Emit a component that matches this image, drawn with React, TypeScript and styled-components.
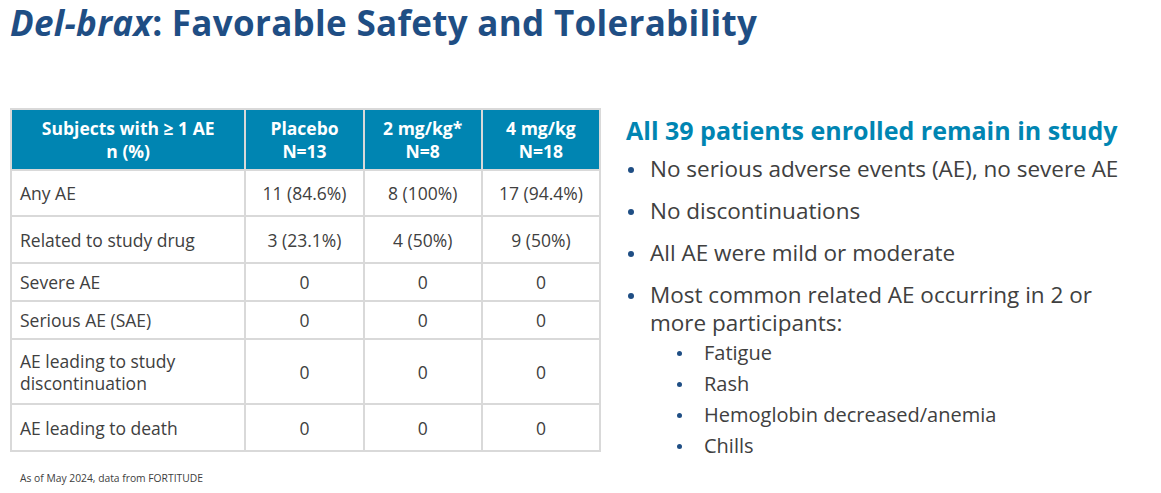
import React from 'react';
import styled, { createGlobalStyle } from 'styled-components';

const colors = {
  navy: '#1f4e84',
  teal: '#0085b2',
  text: '#404040',
  grid: '#d9d9d9',
  white: '#ffffff',
};

const GlobalStyle = createGlobalStyle`
  html, body {
    margin: 0;
    padding: 0;
    background: ${colors.white};
    font-family: 'Open Sans', 'Noto Sans', sans-serif;
  }
`;

const Slide = styled.div`
  width: 1161px;
  height: 493px;
  overflow: hidden;
  box-sizing: border-box;
  padding: 0 0 0 10px;
`;

const Title = styled.h1`
  margin: 0;
  font-size: 35px;
  line-height: 45px;
  font-weight: 700;
  color: ${colors.navy};
  letter-spacing: 0.3px;

  em {
    font-style: italic;
  }
`;

const Body = styled.div`
  display: flex;
  align-items: flex-start;
  margin-top: 63px;
`;

const LeftColumn = styled.div`
  width: 591px;
  display: flex;
  flex-direction: column;
`;

const Table = styled.table`
  width: 591px;
  border-collapse: collapse;
  table-layout: fixed;
  border: 2px solid ${colors.grid};
`;

const HeadCell = styled.th<{ $w: number }>`
  width: ${(p) => p.$w}%;
  height: 59px;
  padding: 0;
  background: ${colors.teal};
  color: ${colors.white};
  font-size: 17.5px;
  line-height: 23px;
  font-weight: 700;
  text-align: center;
  border-left: 2px solid ${colors.grid};
  &:first-child {
    border-left: none;
  }
`;

const Row = styled.tr<{ $h: number }>`
  height: ${(p) => p.$h}px;
  border-top: 2px solid ${colors.grid};
`;

const Cell = styled.td<{ $label?: boolean }>`
  padding: 0 0 0 ${(p) => (p.$label ? '8px' : '0')};
  color: ${colors.text};
  font-size: 17.5px;
  line-height: 22px;
  text-align: ${(p) => (p.$label ? 'left' : 'center')};
  border-left: 2px solid ${colors.grid};
`;

const Footnote = styled.div`
  margin: 19px 0 0 10px;
  font-size: 10.3px;
  color: ${colors.text};
`;

const SidePanel = styled.div`
  margin-left: 25px;
  margin-top: 6px;
`;

const SideHeading = styled.h2`
  margin: 0 0 9px;
  font-size: 25px;
  line-height: 32px;
  font-weight: 700;
  color: ${colors.teal};
`;

const BulletList = styled.ul`
  margin: 0;
  padding: 0;
  list-style: none;
`;

const Bullet = styled.li`
  position: relative;
  padding-left: 24px;
  margin-bottom: 14px;
  font-size: 22.5px;
  line-height: 28px;
  color: ${colors.text};

  &::before {
    content: '';
    position: absolute;
    left: 2px;
    top: 12px;
    width: 6px;
    height: 6px;
    border-radius: 50%;
    background: ${colors.navy};
  }
`;

const SubList = styled.ul`
  margin: 0;
  padding: 0;
  list-style: none;
`;

const SubBullet = styled.li`
  position: relative;
  padding-left: 54px;
  font-size: 20px;
  line-height: 31px;
  color: ${colors.text};

  &::before {
    content: '';
    position: absolute;
    left: 27px;
    top: 14px;
    width: 5px;
    height: 5px;
    border-radius: 50%;
    background: ${colors.navy};
  }
`;

const rows: { label: React.ReactNode; values: string[]; h: number }[] = [
  { label: 'Any AE', values: ['11 (84.6%)', '8 (100%)', '17 (94.4%)'], h: 46 },
  { label: 'Related to study drug', values: ['3 (23.1%)', '4 (50%)', '9 (50%)'], h: 47 },
  { label: 'Severe AE', values: ['0', '0', '0'], h: 38 },
  { label: 'Serious AE (SAE)', values: ['0', '0', '0'], h: 38 },
  {
    label: (
      <>
        AE leading to study
        <br />
        discontinuation
      </>
    ),
    values: ['0', '0', '0'],
    h: 65,
  },
  { label: 'AE leading to death', values: ['0', '0', '0'], h: 47 },
];

const App: React.FC = () => (
  <>
    <GlobalStyle />
    <Slide>
      <Title>
        <em>Del-brax</em>: Favorable Safety and Tolerability
      </Title>
      <Body>
        <LeftColumn>
          <Table>
            <thead>
              <tr>
                <HeadCell $w={40}>
                  Subjects with ≥ 1 AE
                  <br />n (%)
                </HeadCell>
                <HeadCell $w={20}>
                  Placebo
                  <br />
                  N=13
                </HeadCell>
                <HeadCell $w={20}>
                  2 mg/kg*
                  <br />
                  N=8
                </HeadCell>
                <HeadCell $w={20}>
                  4 mg/kg
                  <br />
                  N=18
                </HeadCell>
              </tr>
            </thead>
            <tbody>
              {rows.map((r, i) => (
                <Row key={i} $h={r.h}>
                  <Cell $label>{r.label}</Cell>
                  {r.values.map((v, j) => (
                    <Cell key={j}>{v}</Cell>
                  ))}
                </Row>
              ))}
            </tbody>
          </Table>
          <Footnote>As of May 2024, data from FORTITUDE</Footnote>
        </LeftColumn>
        <SidePanel>
          <SideHeading>All 39 patients enrolled remain in study</SideHeading>
          <BulletList>
            <Bullet>No serious adverse events (AE), no severe AE</Bullet>
            <Bullet>No discontinuations</Bullet>
            <Bullet>All AE were mild or moderate</Bullet>
            <Bullet>
              Most common related AE occurring in 2 or
              <br />
              more participants:
              <SubList>
                <SubBullet>Fatigue</SubBullet>
                <SubBullet>Rash</SubBullet>
                <SubBullet>Hemoglobin decreased/anemia</SubBullet>
                <SubBullet>Chills</SubBullet>
              </SubList>
            </Bullet>
          </BulletList>
        </SidePanel>
      </Body>
    </Slide>
  </>
);

export default App;
